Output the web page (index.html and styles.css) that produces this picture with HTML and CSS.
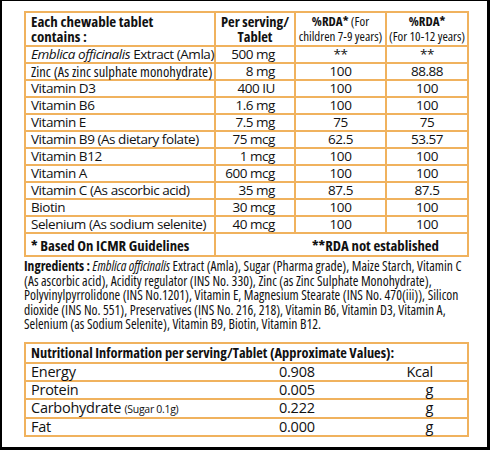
FILE: index.html
```html
<!DOCTYPE html>
<html lang="en">
<head>
	<meta charset="UTF-8">
	<title>Composition</title>
	<link rel="stylesheet" href="styles.css">
</head>
<body>
	<div class="sheet">
		<table class="comp">
			<colgroup>
				<col class="c_name">
				<col class="c_dose">
				<col class="c_rda1">
				<col class="c_rda2">
			</colgroup>
			<thead>
				<tr>
					<th class="name">Each chewable tablet<br>contains :</th>
					<th class="dose_h">Per serving/<br>Tablet</th>
					<th class="rda_h"><b>%RDA*</b> <span>(For<br>children 7-9 years)</span></th>
					<th class="rda_h"><b>%RDA*</b><br><span>(For 10-12 years)</span></th>
				</tr>
			</thead>
			<tbody>
				<tr><td><i>Emblica officinalis</i> Extract (Amla)</td><td class="dose">500 mg</td><td class="rda">**</td><td class="rda">**</td></tr>
				<tr><td class="tight">Zinc (As zinc sulphate monohydrate)</td><td class="dose">8 mg</td><td class="rda">100</td><td class="rda">88.88</td></tr>
				<tr><td>Vitamin D3</td><td class="dose">400 IU</td><td class="rda">100</td><td class="rda">100</td></tr>
				<tr><td>Vitamin B6</td><td class="dose">1.6 mg</td><td class="rda">100</td><td class="rda">100</td></tr>
				<tr><td>Vitamin E</td><td class="dose">7.5 mg</td><td class="rda">75</td><td class="rda">75</td></tr>
				<tr><td>Vitamin B9 (As dietary folate)</td><td class="dose">75 mcg</td><td class="rda">62.5</td><td class="rda">53.57</td></tr>
				<tr><td>Vitamin B12</td><td class="dose">1 mcg</td><td class="rda">100</td><td class="rda">100</td></tr>
				<tr><td>Vitamin A</td><td class="dose">600 mcg</td><td class="rda">100</td><td class="rda">100</td></tr>
				<tr><td>Vitamin C (As ascorbic acid)</td><td class="dose">35 mg</td><td class="rda">87.5</td><td class="rda">87.5</td></tr>
				<tr><td>Biotin</td><td class="dose">30 mcg</td><td class="rda">100</td><td class="rda">100</td></tr>
				<tr><td>Selenium (As sodium selenite)</td><td class="dose">40 mcg</td><td class="rda">100</td><td class="rda">100</td></tr>
			</tbody>
			<tfoot>
				<tr>
					<td class="note">* Based On ICMR Guidelines</td>
					<td class="note_r" colspan="3">**RDA not established</td>
				</tr>
			</tfoot>
		</table>

		<p class="ingr"><b>Ingredients :</b> <i>Emblica officinalis</i> Extract (Amla), Sugar (Pharma grade), Maize Starch, Vitamin C<br>(As ascorbic acid), Acidity regulator (INS No. 330), Zinc (as Zinc Sulphate Monohydrate),<br>Polyvinylpyrrolidone (INS No.1201), Vitamin E, Magnesium Stearate (INS No. 470(iii)), Silicon<br>dioxide (INS No. 551), Preservatives (INS No. 216, 218), Vitamin B6, Vitamin D3, Vitamin A,<br>Selenium (as Sodium Selenite), Vitamin B9, Biotin, Vitamin B12.</p>

		<table class="nutri">
			<colgroup>
				<col class="n_name">
				<col class="n_val">
				<col class="n_unit">
			</colgroup>
			<thead>
				<tr><th colspan="3">Nutritional Information per serving/Tablet (Approximate Values):</th></tr>
			</thead>
			<tbody>
				<tr><td>Energy</td><td class="val">0.908</td><td class="unit">Kcal</td></tr>
				<tr><td>Protein</td><td class="val">0.005</td><td class="unit">g</td></tr>
				<tr><td>Carbohydrate <small>(Sugar 0.1g)</small></td><td class="val">0.222</td><td class="unit">g</td></tr>
				<tr><td>Fat</td><td class="val">0.000</td><td class="unit">g</td></tr>
			</tbody>
		</table>
	</div>
</body>
</html>
```

FILE: styles.css
```css
html,body{margin:0;padding:0;background:#000;}
body{width:490px;height:450px;overflow:hidden;font-family:"Open Sans",sans-serif;font-stretch:75%;color:#111;}
.sheet{margin:1px 3px 0 2px;width:463px;height:436px;padding:10px 0 0 22px;background:#fff;}

table{border-collapse:collapse;table-layout:fixed;}
td,th{border:2px solid #f0b25e;padding:0;white-space:nowrap;}

.comp{width:443px;}
.c_name{width:190px;}
.c_dose{width:80px;}
.c_rda1{width:91px;}
.c_rda2{width:82px;}
.comp thead th{height:32px;font-size:15px;line-height:15px;font-weight:bold;vertical-align:middle;}
.comp th.name{text-align:left;padding-left:5px;}
.comp th.dose_h{text-align:center;font-size:14.5px;}
.comp th.rda_h{text-align:center;font-size:13px;line-height:15px;font-weight:normal;}
.comp th.rda_h b{font-weight:bold;}
.comp tbody td{height:15px;font-size:13.5px;line-height:15px;font-stretch:100%;letter-spacing:-0.45px;padding-left:5px;}
.comp tbody td.tight{font-size:14.5px;font-stretch:75%;letter-spacing:0.05px;}
.comp td.dose{text-align:right;padding:0 19px 0 0;}
.comp td.rda{text-align:center;padding:0;}
.comp tfoot td{height:21px;font-size:14.8px;font-weight:bold;}
.comp td.note{padding-left:5px;}
.comp td.note_r{text-align:right;padding-right:28px;}

.ingr{margin:2px 0 0 0;width:444px;font-size:13.6px;line-height:14.6px;white-space:nowrap;}
.ingr b{font-weight:bold;}

.nutri{margin-top:10px;width:443px;}
.n_name{width:240px;}
.n_val{width:120px;}
.n_unit{width:83px;}
.nutri th{height:18px;text-align:left;padding-left:5px;font-size:14.4px;line-height:18px;font-weight:bold;}
.nutri td{height:16px;font-size:14.5px;line-height:16px;font-stretch:100%;letter-spacing:-0.25px;padding-left:5px;border-left:none;border-right:none;}
.nutri td:first-child{border-left:2px solid #f0b25e;}
.nutri td:last-child{border-right:2px solid #f0b25e;}
.nutri td.val{padding-left:14px;}
.nutri td.unit{text-align:right;padding:0 34px 0 0;}
.nutri small{font-size:10.5px;letter-spacing:-0.3px;}
```
